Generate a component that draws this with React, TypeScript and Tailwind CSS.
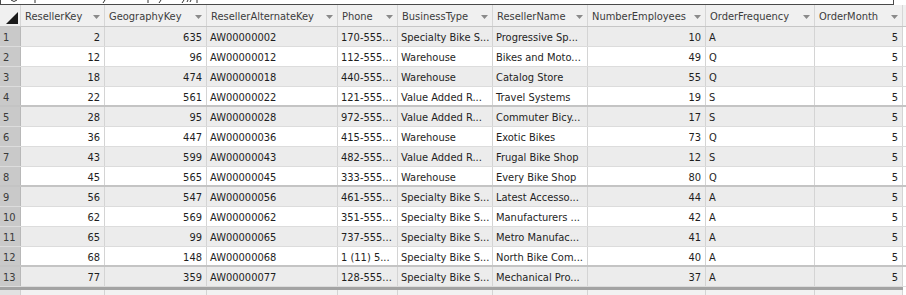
import React from 'react'

const cols = [
  { name: 'ResellerKey', w: 'w-[84px]', align: 'right' },
  { name: 'GeographyKey', w: 'w-[102px]', align: 'right' },
  { name: 'ResellerAlternateKey', w: 'w-[131px]', align: 'left' },
  { name: 'Phone', w: 'w-[60px]', align: 'left' },
  { name: 'BusinessType', w: 'w-[95px]', align: 'left' },
  { name: 'ResellerName', w: 'w-[95px]', align: 'left' },
  { name: 'NumberEmployees', w: 'w-[118px]', align: 'right' },
  { name: 'OrderFrequency', w: 'w-[109px]', align: 'left' },
  { name: 'OrderMonth', w: 'w-[88px]', align: 'right' },
]

const rows = [
  ['2', '635', 'AW00000002', '170-555...', 'Specialty Bike S...', 'Progressive Sp...', '10', 'A', '5'],
  ['12', '96', 'AW00000012', '112-555...', 'Warehouse', 'Bikes and Moto...', '49', 'Q', '5'],
  ['18', '474', 'AW00000018', '440-555...', 'Warehouse', 'Catalog Store', '55', 'Q', '5'],
  ['22', '561', 'AW00000022', '121-555...', 'Value Added R...', 'Travel Systems', '19', 'S', '5'],
  ['28', '95', 'AW00000028', '972-555...', 'Value Added R...', 'Commuter Bicy...', '17', 'S', '5'],
  ['36', '447', 'AW00000036', '415-555...', 'Warehouse', 'Exotic Bikes', '73', 'Q', '5'],
  ['43', '599', 'AW00000043', '482-555...', 'Value Added R...', 'Frugal Bike Shop', '12', 'S', '5'],
  ['45', '565', 'AW00000045', '333-555...', 'Warehouse', 'Every Bike Shop', '80', 'Q', '5'],
  ['56', '547', 'AW00000056', '461-555...', 'Specialty Bike S...', 'Latest Accesso...', '44', 'A', '5'],
  ['62', '569', 'AW00000062', '351-555...', 'Specialty Bike S...', 'Manufacturers ...', '42', 'A', '5'],
  ['65', '99', 'AW00000065', '737-555...', 'Specialty Bike S...', 'Metro Manufac...', '41', 'A', '5'],
  ['68', '148', 'AW00000068', '1 (11) 5...', 'Specialty Bike S...', 'North Bike Com...', '40', 'A', '5'],
  ['77', '359', 'AW00000077', '128-555...', 'Specialty Bike S...', 'Mechanical Pro...', '37', 'A', '5'],
]

function FilterArrow() {
  return (
    <svg width="7" height="4" viewBox="0 0 7 4" className="shrink-0">
      <path d="M0 0 H7 L3.5 4 Z" fill="#8a8a8a" />
    </svg>
  )
}

// descender fragments of the formula bar text, clipped by the grid
function FormulaFragments() {
  return (
    <svg width="894" height="4" viewBox="0 0 894 4" className="block">
      <g stroke="#333" strokeWidth="1" fill="none">
        <path d="M10 0 Q13 3 16 0" />
        <path d="M34 0 V3" />
        <path d="M104 0 L102 3" />
        <path d="M147 0 V3" />
        <path d="M160 0 L158 3" />
        <path d="M183 0 L181 3" />
        <path d="M187 0 L186 2" />
        <path d="M190 0 L189 2" />
        <path d="M196 0 V3" />
      </g>
    </svg>
  )
}

export default function App() {
  return (
    <div
      className="w-[906px] h-[295px] overflow-hidden bg-white text-[11px] leading-none text-[#1e1e1e]"
      style={{ fontFamily: '"DejaVu Sans Condensed", Tahoma, "Liberation Sans", sans-serif', fontStretch: 'condensed' }}
    >
      {/* clipped formula bar above the grid */}
      <div className="h-[4px] w-[894px] border-l border-r border-[#4a4a4a] overflow-hidden">
        <FormulaFragments />
      </div>
      <div className="h-px w-[894px] bg-[#4a4a4a]" />

      {/* header */}
      <div className="flex h-[22px] w-[906px] bg-[#f0f0f0] border-b border-[#c6c6c6]">
        <div className="w-[21px] shrink-0 flex items-end justify-end pr-[2px] pb-[2px] border-r border-[#d6d6d6]">
          <svg width="12" height="12" viewBox="0 0 12 12">
            <path d="M12 0 V12 H0 Z" fill="#1a1a1a" />
          </svg>
        </div>
        {cols.map((c) => (
          <div
            key={c.name}
            className={`${c.w} shrink-0 flex items-center justify-between pl-[4px] pr-[4px] pt-[2px] border-r border-[#d6d6d6] text-[#3c3c3c]`}
          >
            <span className="whitespace-nowrap">{c.name}</span>
            <FilterArrow />
          </div>
        ))}
        <div className="flex-1" />
      </div>

      {/* body */}
      {rows.map((r, i) => {
        const odd = i % 2 === 0
        const group = (i + 1) % 4 === 0 && i < 12
        return (
          <div
            key={i}
            className={`flex h-[20px] w-[906px] ${group ? 'border-b-2 border-[#c4c4c4]' : 'border-b border-[#dcdcdc]'} ${odd ? 'bg-[#ececec]' : 'bg-white'}`}
          >
            <div className="w-[21px] shrink-0 flex items-center pl-[3px] pt-[2px] bg-[#c9c9c9] border-r border-[#b8b8b8] text-[#3a3a3a]">
              {i + 1}
            </div>
            {cols.map((c, j) => (
              <div
                key={c.name}
                className={`${c.w} shrink-0 flex items-center px-[3px] pt-[2px] border-r border-[#d4d4d4] whitespace-nowrap overflow-hidden ${c.align === 'right' ? 'justify-end pr-[4px]' : 'justify-start'}`}
              >
                {r[j]}
              </div>
            ))}
            <div className="flex-1 bg-white" />
          </div>
        )
      })}

      {/* bottom edge */}
      <div className="h-[3px] w-[903px] bg-[#a3a3a3]" />
      <div className="flex h-[6px] w-[906px]">
        <div className="w-[21px] shrink-0 bg-[#e2e2e2] border-r border-[#d0d0d0]" />
        {cols.map((c) => (
          <div key={c.name} className={`${c.w} shrink-0 bg-[#f2f2f2] border-r border-[#d4d4d4]`} />
        ))}
        <div className="flex-1" />
      </div>
    </div>
  )
}
